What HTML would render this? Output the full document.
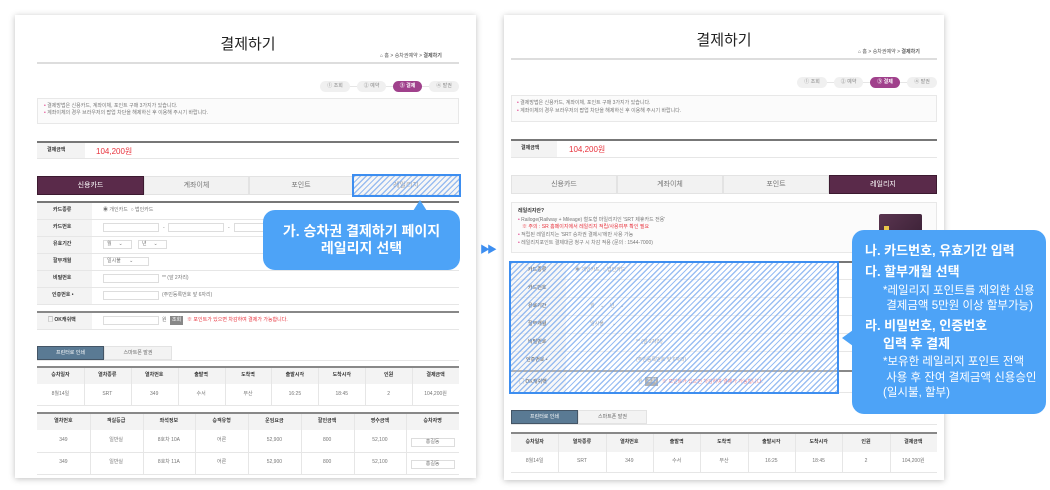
<!DOCTYPE html>
<html><head><meta charset="utf-8">
<style>
*{margin:0;padding:0;box-sizing:border-box}
body{width:1050px;height:490px;background:#fff;position:relative;overflow:hidden;font-family:"Liberation Sans","Noto Sans CJK KR",sans-serif;color:#333}
.a{position:absolute}
.panel{position:absolute;background:#fff;box-shadow:0 1px 6px rgba(0,0,0,.25)}
.t{position:absolute;font-size:5px;color:#777;white-space:nowrap;line-height:1}
.c{text-align:center}
.gl{position:absolute;background:#f3f3f3}
.hl{position:absolute;height:1px;background:#e6e6e6}
.inp{position:absolute;height:9px;border:1px solid #ddd;background:#fff}
.pill{position:absolute;height:11px;border-radius:6px;background:#f0f0f0;font-size:5px;color:#888;text-align:center;line-height:11px}
.tab{position:absolute;background:#f2f2f2;border:1px solid #e3e3e3;font-size:7px;color:#777;text-align:center}
.hatch{position:absolute;border:2px solid #3d8ef0;background:repeating-linear-gradient(135deg,rgba(130,175,240,.8) 0 1.3px,rgba(255,255,255,.35) 1.3px 4px)}
.bub{position:absolute;background:#4da3f7;border-radius:12px;color:#fff;font-weight:bold}
</style></head><body>

<!-- LEFT PANEL -->
<div class="panel" style="left:15px;top:15px;width:461px;height:463px"></div>
<div class="a" style="left:37px;top:33px;width:422px;text-align:center;font-size:15px;color:#222">결제하기</div>
<div class="t" style="left:380px;top:54px;color:#555">⌂ 홈 &gt; 승차권예약 &gt; <b>결제하기</b></div>
<div class="a" style="left:37px;top:62px;width:422px;height:2px;background:#ddd"></div>
<div class="a" style="left:335px;top:86px;width:110px;height:1px;background:#e6e6e6"></div>
<div class="pill" style="left:320px;top:81px;width:30px">① 조회</div>
<div class="pill" style="left:357px;top:81px;width:29px">② 예약</div>
<div class="pill" style="left:393px;top:81px;width:29px;background:#a0418c;color:#fff;font-weight:bold">③ 결제</div>
<div class="pill" style="left:429px;top:81px;width:30px">④ 발권</div>
<div class="a" style="left:37px;top:98px;width:422px;height:26px;border:1px solid #e8e8e8;background:#fbfbfb"></div>
<div class="t" style="left:44px;top:104px"><span style="color:#e0408c">•</span> 결제방법은 신용카드, 계좌이체, 포인트 구매 3가지가 있습니다.</div>
<div class="t" style="left:44px;top:111px"><span style="color:#e0408c">•</span> 계좌이체의 경우 브라우저의 팝업 차단을 해제하신 후 이용해 주시기 바랍니다.</div>
<div class="a" style="left:37px;top:141px;width:422px;height:2px;background:#777"></div>
<div class="gl" style="left:37px;top:143px;width:48px;height:15px"></div>
<div class="t" style="left:47px;top:148px;color:#333;font-weight:bold">결제금액</div>
<div class="a" style="left:96px;top:146px;font-size:8px;color:#e8323c">104,200원</div>
<div class="hl" style="left:37px;top:158px;width:422px"></div>
<div class="tab" style="left:37px;top:176px;width:107px;height:19px;background:#5a2a4a;border-color:#3c1a30;color:#fff;line-height:18px">신용카드</div>
<div class="tab" style="left:144px;top:176px;width:105px;height:19px;line-height:18px">계좌이체</div>
<div class="tab" style="left:249px;top:176px;width:104px;height:19px;line-height:18px">포인트</div>
<div class="tab" style="left:353px;top:176px;width:106px;height:19px;line-height:18px">레일리지</div>
<div class="hatch" style="left:352px;top:174px;width:109px;height:23px"></div>
<div class="a" style="left:37px;top:201px;width:422px;height:2px;background:#777"></div>
<div class="gl" style="left:37px;top:203px;width:55px;height:102px"></div>
<div class="hl" style="left:37px;top:219px;width:422px"></div>
<div class="hl" style="left:37px;top:236px;width:422px"></div>
<div class="hl" style="left:37px;top:253px;width:422px"></div>
<div class="hl" style="left:37px;top:270px;width:422px"></div>
<div class="hl" style="left:37px;top:287px;width:422px"></div>
<div class="hl" style="left:37px;top:304px;width:422px"></div>
<div class="t" style="left:53px;top:208px;color:#333;font-weight:bold">카드종류</div>
<div class="t" style="left:53px;top:225px;color:#333;font-weight:bold">카드번호</div>
<div class="t" style="left:53px;top:242px;color:#333;font-weight:bold">유효기간</div>
<div class="t" style="left:53px;top:259px;color:#333;font-weight:bold">할부개월</div>
<div class="t" style="left:53px;top:276px;color:#333;font-weight:bold">비밀번호</div>
<div class="t" style="left:52px;top:293px;color:#333;font-weight:bold">인증번호 •</div>
<div class="t" style="left:103px;top:208px">◉ 개인카드 &nbsp;○ 법인카드</div>
<div class="inp" style="left:103px;top:223px;width:56px"></div><div class="t" style="left:163px;top:226px">-</div>
<div class="inp" style="left:168px;top:223px;width:56px"></div><div class="t" style="left:228px;top:226px">-</div>
<div class="inp" style="left:234px;top:223px;width:30px"></div>
<div class="inp" style="left:103px;top:240px;width:29px"></div><div class="t" style="left:107px;top:242px">월 &nbsp;&nbsp;&nbsp;&nbsp;⌄</div>
<div class="inp" style="left:138px;top:240px;width:29px"></div><div class="t" style="left:142px;top:242px">년 &nbsp;&nbsp;&nbsp;&nbsp;⌄</div>
<div class="inp" style="left:103px;top:257px;width:46px"></div><div class="t" style="left:107px;top:259px">일시불 &nbsp;&nbsp;&nbsp;&nbsp;&nbsp;⌄</div>
<div class="inp" style="left:103px;top:274px;width:56px"></div><div class="t" style="left:162px;top:276px">** (앞 2자리)</div>
<div class="inp" style="left:103px;top:291px;width:56px"></div><div class="t" style="left:162px;top:293px">(주민등록번호 앞 6자리)</div>
<div class="a" style="left:37px;top:311px;width:422px;height:2px;background:#888"></div>
<div class="gl" style="left:37px;top:313px;width:55px;height:16px"></div>
<div class="hl" style="left:37px;top:329px;width:422px"></div>
<div class="t" style="left:48px;top:318px;color:#333;font-weight:bold">▢ OK캐쉬백</div>
<div class="inp" style="left:103px;top:316px;width:56px"></div>
<div class="t" style="left:162px;top:318px">원</div>
<div class="a" style="left:170px;top:316px;width:13px;height:9px;background:#888;color:#fff;font-size:5px;text-align:center;line-height:9px">조회</div>
<div class="t" style="left:187px;top:318px;color:#e8323c">※ 포인트가 있으면 차감하여 결제가 가능합니다.</div>
<div class="a" style="left:37px;top:346px;width:67px;height:14px;background:#5a7a94;border:1px solid #456;color:#fff;font-size:5px;text-align:center;line-height:12px">프린터로 인쇄</div>
<div class="a" style="left:104px;top:346px;width:68px;height:14px;background:#f3f3f3;border:1px solid #e3e3e3;color:#666;font-size:5px;text-align:center;line-height:12px">스마트폰 발권</div>
<div class="hl" style="left:37px;top:360px;width:422px"></div>
<div class="a" style="left:37px;top:366px;width:422px;height:2px;background:#888"></div>
<div class="gl" style="left:37px;top:368px;width:422px;height:16px"></div>
<div class="hl" style="left:37px;top:405px;width:422px"></div>
<div class="a" style="left:37px;top:412px;width:422px;height:2px;background:#888"></div>
<div class="gl" style="left:37px;top:414px;width:422px;height:16px"></div>
<div class="hl" style="left:37px;top:452px;width:422px"></div>
<div class="hl" style="left:37px;top:474px;width:422px"></div>
<div id="lt"></div>

<!-- ARROW -->
<div class="a" style="left:480px;top:241px;color:#3d8ef0;font-size:10px;letter-spacing:-3px">▶▶</div>

<!-- RIGHT PANEL -->
<div class="panel" style="left:504px;top:15px;width:440px;height:465px"></div>
<div class="a" style="left:511px;top:29px;width:426px;text-align:center;font-size:15px;color:#222">결제하기</div>
<div class="t" style="left:858px;top:50px;color:#555">⌂ 홈 &gt; 승차권예약 &gt; <b>결제하기</b></div>
<div class="a" style="left:511px;top:58px;width:426px;height:2px;background:#ddd"></div>
<div class="a" style="left:810px;top:82px;width:120px;height:1px;background:#e6e6e6"></div>
<div class="pill" style="left:797px;top:77px;width:30px">① 조회</div>
<div class="pill" style="left:834px;top:77px;width:29px">② 예약</div>
<div class="pill" style="left:870px;top:77px;width:30px;background:#a0418c;color:#fff;font-weight:bold">③ 결제</div>
<div class="pill" style="left:907px;top:77px;width:30px">④ 발권</div>
<div class="a" style="left:511px;top:95px;width:426px;height:27px;border:1px solid #e8e8e8;background:#fbfbfb"></div>
<div class="t" style="left:517px;top:101px"><span style="color:#e0408c">•</span> 결제방법은 신용카드, 계좌이체, 포인트 구매 3가지가 있습니다.</div>
<div class="t" style="left:517px;top:109px"><span style="color:#e0408c">•</span> 계좌이체의 경우 브라우저의 팝업 차단을 해제하신 후 이용해 주시기 바랍니다.</div>
<div class="a" style="left:511px;top:139px;width:426px;height:2px;background:#777"></div>
<div class="gl" style="left:511px;top:141px;width:46px;height:16px"></div>
<div class="t" style="left:521px;top:146px;color:#333;font-weight:bold">결제금액</div>
<div class="a" style="left:569px;top:144px;font-size:8px;color:#e8323c">104,200원</div>
<div class="hl" style="left:511px;top:157px;width:426px"></div>
<div class="tab" style="left:511px;top:175px;width:106px;height:19px;line-height:18px">신용카드</div>
<div class="tab" style="left:617px;top:175px;width:106px;height:19px;line-height:18px">계좌이체</div>
<div class="tab" style="left:723px;top:175px;width:106px;height:19px;line-height:18px">포인트</div>
<div class="tab" style="left:829px;top:175px;width:108px;height:19px;background:#5a2a4a;border-color:#3c1a30;color:#fff;line-height:18px">레일리지</div>
<div class="a" style="left:511px;top:202px;width:426px;height:51px;border:1px solid #e8e8e8;background:#fbfbfb"></div>
<div class="t" style="left:518px;top:209px;color:#333;font-weight:bold">레일리지란?</div>
<div class="t" style="left:518px;top:218px"><span style="color:#e0408c">•</span> Railoge(Railway + Mileage) 철도형 마일리지인 'SRT 제휴카드 전용'</div>
<div class="t" style="left:522px;top:225px;color:#e8323c">※ 주의 : SR 홈페이지에서 레일리지 적립/사용여부 확인 필요</div>
<div class="t" style="left:518px;top:233px"><span style="color:#e0408c">•</span> 적립된 레일리지는 'SRT 승차권 결제시'에만 사용 가능</div>
<div class="t" style="left:518px;top:241px"><span style="color:#e0408c">•</span> 레일리지포인트 결제대금 청구 시 차감 적용 (문의 : 1544-7000)</div>
<div class="a" style="left:879px;top:214px;width:43px;height:27px;border-radius:2px;background:linear-gradient(135deg,#5a3550,#3a2035)"><div class="a" style="left:5px;top:12px;width:5px;height:5px;background:#e8c64a"></div></div>
<div class="a" style="left:511px;top:261px;width:426px;height:2px;background:#777"></div>
<div class="gl" style="left:511px;top:263px;width:55px;height:107px"></div>
<div class="hl" style="left:511px;top:279px;width:426px"></div>
<div class="hl" style="left:511px;top:297px;width:426px"></div>
<div class="hl" style="left:511px;top:315px;width:426px"></div>
<div class="hl" style="left:511px;top:333px;width:426px"></div>
<div class="hl" style="left:511px;top:351px;width:426px"></div>
<div class="a" style="left:511px;top:370px;width:426px;height:2px;background:#888"></div>
<div class="gl" style="left:511px;top:372px;width:55px;height:20px"></div>
<div class="hl" style="left:511px;top:392px;width:426px"></div>
<div class="t" style="left:528px;top:268px;color:#333;font-weight:bold">카드종류</div>
<div class="t" style="left:528px;top:286px;color:#333;font-weight:bold">카드번호</div>
<div class="t" style="left:528px;top:304px;color:#333;font-weight:bold">유효기간</div>
<div class="t" style="left:528px;top:322px;color:#333;font-weight:bold">할부개월</div>
<div class="t" style="left:528px;top:340px;color:#333;font-weight:bold">비밀번호</div>
<div class="t" style="left:526px;top:358px;color:#333;font-weight:bold">인증번호 •</div>
<div class="t" style="left:519px;top:380px;color:#333;font-weight:bold">▢ OK캐쉬백</div>
<div class="t" style="left:575px;top:268px">◉ 개인카드 &nbsp;○ 법인카드</div>
<div class="t" style="left:590px;top:304px">월 &nbsp;&nbsp;&nbsp;⌄ &nbsp;&nbsp;&nbsp;년 &nbsp;&nbsp;&nbsp;⌄</div>
<div class="t" style="left:590px;top:322px">일시불 &nbsp;&nbsp;&nbsp;&nbsp;&nbsp;⌄</div>
<div class="t" style="left:638px;top:380px">원</div>
<div class="a" style="left:645px;top:377px;width:13px;height:9px;background:#888;color:#fff;font-size:5px;text-align:center;line-height:9px">조회</div>
<div class="t" style="left:662px;top:380px;color:#e8323c">※ 포인트가 있으면 차감하여 결제가 가능합니다.</div>
<div class="t" style="left:636px;top:340px">** (앞 2자리)</div>
<div class="t" style="left:636px;top:358px">(주민등록번호 앞 6자리)</div>
<div class="hatch" style="left:509px;top:261px;width:330px;height:133px"></div>
<div class="a" style="left:511px;top:410px;width:67px;height:14px;background:#5a7a94;border:1px solid #456;color:#fff;font-size:5px;text-align:center;line-height:12px">프린터로 인쇄</div>
<div class="a" style="left:578px;top:410px;width:69px;height:14px;background:#f3f3f3;border:1px solid #e3e3e3;color:#666;font-size:5px;text-align:center;line-height:12px">스마트폰 발권</div>
<div class="hl" style="left:511px;top:424px;width:426px"></div>
<div class="a" style="left:511px;top:432px;width:426px;height:2px;background:#888"></div>
<div class="gl" style="left:511px;top:434px;width:426px;height:18px"></div>
<div class="hl" style="left:511px;top:472px;width:426px"></div>
<div id="rt"></div>

<!-- BUBBLES -->
<div class="bub" style="left:263px;top:210px;width:197px;height:60px;font-size:14px;line-height:17px;padding-top:13px;text-align:center">가. 승차권 결제하기 페이지<br>레일리지 선택</div>
<div class="a" style="left:413px;top:200px;width:0;height:0;border-left:7px solid transparent;border-right:7px solid transparent;border-bottom:11px solid #4da3f7"></div>

<div class="bub" style="left:852px;top:230px;width:194px;height:184px"></div>
<div class="a" style="left:842px;top:330px;width:0;height:0;border-top:8px solid transparent;border-bottom:8px solid transparent;border-right:11px solid #4da3f7"></div>
<div class="a" style="left:865px;top:240px;color:#fff;font-weight:bold;font-size:13px;line-height:21px;white-space:nowrap">나. 카드번호, 유효기간 입력<br>다. 할부개월 선택</div>
<div class="a" style="left:883px;top:284px;color:#fff;font-size:11.5px;line-height:15px;white-space:nowrap">*레일리지 포인트를 제외한 신용<br>&nbsp;결제금액 5만원 이상 할부가능)</div>
<div class="a" style="left:865px;top:317px;color:#fff;font-weight:bold;font-size:13px;line-height:18px;white-space:nowrap">라. 비밀번호, 인증번호<br>&nbsp;&nbsp;&nbsp;&nbsp;&nbsp;입력 후 결제</div>
<div class="a" style="left:883px;top:355px;color:#fff;font-size:11.5px;line-height:15.5px;white-space:nowrap">*보유한 레일리지 포인트 전액<br>&nbsp;사용 후 잔여 결제금액 신용승인<br>(일시불, 할부)</div>

<script>
function tbl(el,x,w,y,rows,heights){
  var h='',n=rows[0].length,cw=w/n,yy=y;
  rows.forEach(function(r,i){
    r.forEach(function(c,j){
      h+='<div class="t c" style="left:'+(x+j*cw)+'px;top:'+(yy+heights[i]/2-3)+'px;width:'+cw+'px;'+(i==0?'color:#333;font-weight:bold':'')+'">'+c+'</div>';
      if(j>0)h+='<div class="a" style="left:'+(x+j*cw)+'px;top:'+yy+'px;width:1px;height:'+heights[i]+'px;background:#e6e6e6"></div>';
    });
    yy+=heights[i];
  });
  document.getElementById(el).insertAdjacentHTML('beforeend',h);
}
var h1=['승차일자','열차종류','열차번호','출발역','도착역','출발시각','도착시각','인원','결제금액'];
var d1=['8월14일','SRT','349','수서','부산','16:25','18:45','2','104,200원'];
tbl('lt',37,422,368,[h1,d1],[16,21]);
tbl('lt',37,422,414,[['열차번호','객실등급','좌석정보','승객유형','운임요금','할인금액','영수금액','승차자명'],['349','일반실','8호차 10A','어른','52,900','800','52,100','<span style="display:inline-block;border:1px solid #ddd;width:44px;height:9px;line-height:7px">홍길동</span>'],['349','일반실','8호차 11A','어른','52,900','800','52,100','<span style="display:inline-block;border:1px solid #ddd;width:44px;height:9px;line-height:7px">홍길동</span>']],[16,22,22]);
tbl('rt',511,426,434,[h1,d1],[18,20]);
</script>
</body></html>
